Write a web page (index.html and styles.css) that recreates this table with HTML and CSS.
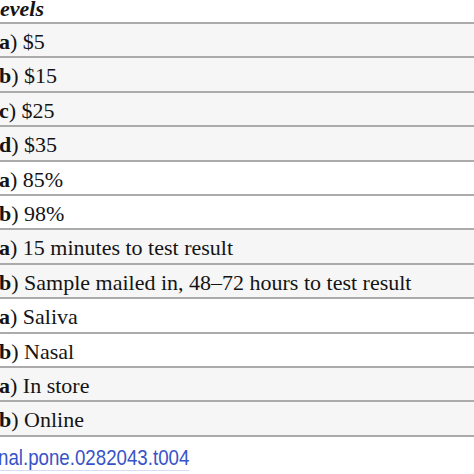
FILE: index.html
```html
<!DOCTYPE html>
<html>
<head>
<meta charset="utf-8">
<link rel="stylesheet" href="styles.css">
</head>
<body>
<div class="table">
  <div class="row head"><span class="hd">evels</span></div>
  <div class="row shade"><span class="cell"><b>a</b>) $5</span></div>
  <div class="row shade"><span class="cell"><b>b</b>) $15</span></div>
  <div class="row shade"><span class="cell"><b>c</b>) $25</span></div>
  <div class="row shade"><span class="cell"><b>d</b>) $35</span></div>
  <div class="row"><span class="cell"><b>a</b>) 85%</span></div>
  <div class="row"><span class="cell"><b>b</b>) 98%</span></div>
  <div class="row shade"><span class="cell"><b>a</b>) 15 minutes to test result</span></div>
  <div class="row shade"><span class="cell"><b>b</b>) Sample mailed in, 48–72 hours to test result</span></div>
  <div class="row"><span class="cell"><b>a</b>) Saliva</span></div>
  <div class="row"><span class="cell"><b>b</b>) Nasal</span></div>
  <div class="row shade"><span class="cell"><b>a</b>) In store</span></div>
  <div class="row shade"><span class="cell"><b>b</b>) Online</span></div>
</div>
<div class="doi"><span class="link">nal.pone.0282043.t004</span></div>
</body>
</html>
```
FILE: styles.css
```css
html, body {
  margin: 0;
  padding: 0;
  background: #ffffff;
  overflow: hidden;
}
body {
  width: 474px;
  height: 474px;
  font-family: "Liberation Serif", "Times New Roman", serif;
  color: #141414;
}
.table {
  width: 474px;
}
.row {
  height: 31.4px;
  padding-top: 1px;
  line-height: 33px;
  font-size: 22px;
  border-bottom: 2px solid #ababab;
  white-space: nowrap;
  overflow: hidden;
}
.row.shade {
  background: #f6f6f6;
}
.row.head {
  height: 22px;
  padding-top: 0;
  line-height: 18px;
  overflow: visible;
}
.hd {
  font-weight: bold;
  font-style: italic;
}
.cell {
  display: inline-block;
  margin-left: -1px;
}
.cell b {
  font-weight: bold;
}
.doi {
  padding-top: 8px;
  height: 28px;
  white-space: nowrap;
}
.link {
  display: inline-block;
  font-family: "Liberation Sans", Arial, sans-serif;
  font-size: 22px;
  line-height: 25px;
  color: #3853c8;
  transform: scaleX(0.85);
  transform-origin: left center;
  margin-left: -2px;
  border-bottom: 1px solid #d8dcf2;
}
```
